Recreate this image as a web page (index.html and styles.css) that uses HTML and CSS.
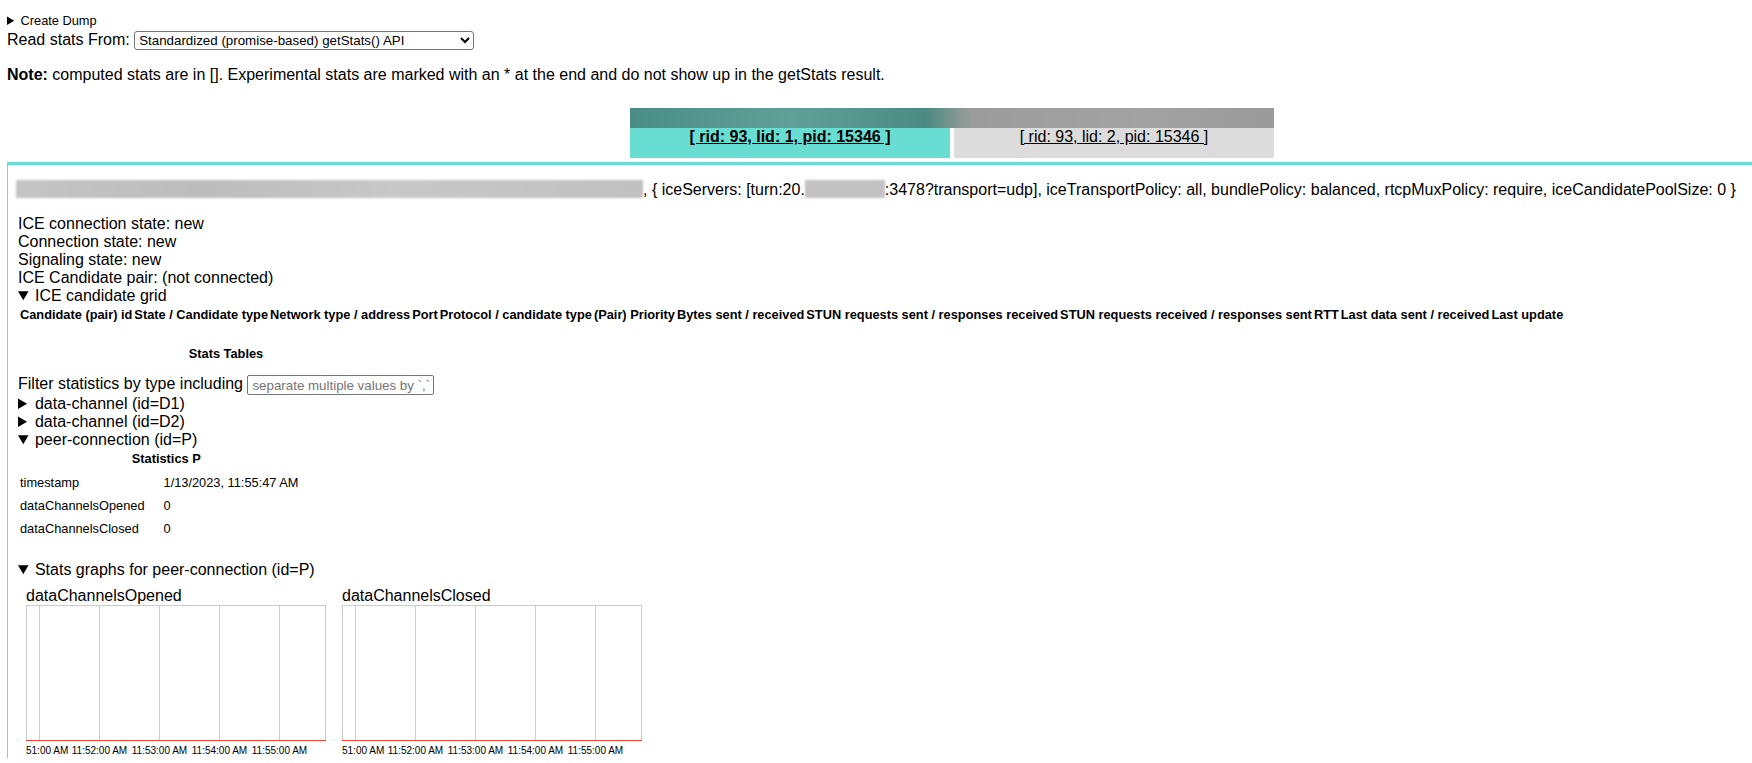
FILE: index.html
```html
<!DOCTYPE html>
<html lang="en">
<head>
<meta charset="utf-8">
<title>WebRTC Internals</title>
<link rel="stylesheet" href="styles.css">
</head>
<body>
<details class="dump"><summary>Create Dump</summary></details>
<div class="read-row">Read stats From:
  <select class="api-select"><option>Standardized (promise-based) getStats() API</option></select>
</div>
<p class="note"><b>Note:</b> computed stats are in []. Experimental stats are marked with an * at the end and do not show up in the getStats result.</p>
<div class="tabs">
  <div class="tabs-cover"></div>
  <div class="tab-row">
    <a class="tab active" href="#">[ rid: 93, lid: 1, pid: 15346 ]</a>
    <a class="tab" href="#">[ rid: 93, lid: 2, pid: 15346 ]</a>
  </div>
</div>
<main class="panel">
  <div class="config"><span class="blur-long"></span>, { iceServers: [turn:20.<span class="blur-short"></span>:3478?transport=udp], iceTransportPolicy: all, bundlePolicy: balanced, rtcpMuxPolicy: require, iceCandidatePoolSize: 0 }</div>
  <div class="states">
    <div>ICE connection state: new</div>
    <div>Connection state: new</div>
    <div>Signaling state: new</div>
    <div>ICE Candidate pair: (not connected)</div>
  </div>
  <details class="grid" open>
    <summary>ICE candidate grid</summary>
    <table class="cand">
      <tr>
        <th>Candidate (pair) id</th><th>State / Candidate type</th><th>Network type / address</th><th>Port</th><th>Protocol / candidate type</th><th>(Pair) Priority</th><th>Bytes sent / received</th><th>STUN requests sent / responses received</th><th>STUN requests received / responses sent</th><th>RTT</th><th>Last data sent / received</th><th>Last update</th>
      </tr>
    </table>
  </details>
  <section class="stats-box">
    <div class="stats-title">Stats Tables</div>
    <div class="filter">Filter statistics by type including <input class="filter-input" placeholder="separate multiple values by `,`"></div>
  </section>
  <details><summary>data-channel (id=D1)</summary></details>
  <details><summary>data-channel (id=D2)</summary></details>
  <details open>
    <summary>peer-connection (id=P)</summary>
    <table class="stat">
      <caption>Statistics P</caption>
      <tr><td>timestamp</td><td>1/13/2023, 11:55:47 AM</td></tr>
      <tr><td>dataChannelsOpened</td><td>0</td></tr>
      <tr><td>dataChannelsClosed</td><td>0</td></tr>
    </table>
  </details>
  <details class="graphs" open>
    <summary>Stats graphs for peer-connection (id=P)</summary>
    <div class="charts">
      <figure class="chart">
        <figcaption>dataChannelsOpened</figcaption>
        <svg width="300" height="153" viewBox="0 0 300 153">
          <rect x="0.5" y="0.5" width="299" height="135" fill="none" stroke="#ccc"/>
          <path d="M13.5 0V135M73.5 0V135M133.5 0V135M193.5 0V135M253.5 0V135" stroke="#ccc" fill="none"/>
          <path d="M0 135.5H300" stroke="#f44336" fill="none"/>
          <g class="tick"><text class="first" x="0" y="149">51:00 AM</text><text x="73.5" y="149">11:52:00 AM</text><text x="133.5" y="149">11:53:00 AM</text><text x="193.5" y="149">11:54:00 AM</text><text x="253.5" y="149">11:55:00 AM</text></g>
        </svg>
      </figure>
      <figure class="chart">
        <figcaption>dataChannelsClosed</figcaption>
        <svg width="300" height="153" viewBox="0 0 300 153">
          <rect x="0.5" y="0.5" width="299" height="135" fill="none" stroke="#ccc"/>
          <path d="M13.5 0V135M73.5 0V135M133.5 0V135M193.5 0V135M253.5 0V135" stroke="#ccc" fill="none"/>
          <path d="M0 135.5H300" stroke="#f44336" fill="none"/>
          <g class="tick"><text class="first" x="0" y="149">51:00 AM</text><text x="73.5" y="149">11:52:00 AM</text><text x="133.5" y="149">11:53:00 AM</text><text x="193.5" y="149">11:54:00 AM</text><text x="253.5" y="149">11:55:00 AM</text></g>
        </svg>
      </figure>
    </div>
  </details>
</main>
</body>
</html>
```
FILE: styles.css
```css
html, body { height: 100%; }
html { overflow: hidden; }
body {
  margin: 0;
  padding: 13px 0 0 7px;
  box-sizing: border-box;
  font-family: "Liberation Sans", Arial, sans-serif;
  font-size: 16px;
  line-height: 18px;
  color: #000;
  background: #fff;
  overflow: hidden;
}
.dump { font-size: 12.8px; line-height: 15px; height: 18px; }
.read-row { height: 19px; }
.api-select {
  font: 13.33px "Liberation Sans", Arial, sans-serif;
  width: 340px;
  height: 19px;
  margin: 0;
  vertical-align: top;
  background: #fff;
  color: #000;
  border: 1px solid #767676;
  border-radius: 3px;
}
.note { margin: 16px 0 0; height: 18px; }
.tabs { margin: 24px 0 0 623px; width: 644px; }
.tabs-cover {
  height: 20px;
  background: linear-gradient(90deg, #4a8d84 0%, #5fa197 25%, #4b8b82 46%, #9c9c9c 53%, #a2a2a2 80%, #9a9a9a 100%);
}
.tab-row { display: flex; gap: 4px; height: 30px; }
.tab {
  flex: 1;
  display: block;
  text-align: center;
  background: #dcdcdc;
  color: #000;
  line-height: 18px;
  text-decoration: underline;
}
.tab.active { background: #6addd2; font-weight: bold; }
.panel {
  margin-top: 4px;
  border-top: 3px solid #6addd2;
  border-left: 1px solid #6addd2;
  padding: 15px 0 0 10px;
}
.config { height: 18px; line-height: 20px; white-space: nowrap; }
.blur-long, .blur-short { display: inline-block; vertical-align: top; height: 18px; background: #c2c2c2; filter: blur(1px); }
.blur-long {
  width: 627px;
  margin-left: -2px;
  background: linear-gradient(90deg, #c4c4c4, #bcbcbc 30%, #c8c8c8 60%, #c0c0c0);
}
.blur-short { width: 80px; }
.states { margin-top: 17px; }
.cand { border-collapse: separate; border-spacing: 2px; font-size: 12.8px; line-height: 15px; white-space: nowrap; }
.cand th { padding: 0; font-weight: bold; text-align: center; }
.stats-box { width: 416px; margin-top: 22px; }
.stats-title { font-size: 12.8px; line-height: 15px; font-weight: bold; text-align: center; }
.filter { margin-top: 14px; height: 20px; line-height: 18px; white-space: nowrap; }
.filter-input {
  font: 13.33px "Liberation Sans", Arial, sans-serif;
  width: 187px;
  height: 20px;
  padding: 1px 4px;
  box-sizing: border-box;
  border: 1px solid #767676;
  border-radius: 2px;
  vertical-align: top;
}
.filter-input::placeholder { color: #757575; }
.stat { border-collapse: separate; border-spacing: 2px; font-size: 12.8px; line-height: 15px; }
.stat caption { font-weight: bold; padding: 2px 0 4px; }
.stat td { padding: 3px 17px 3px 0; }
.stat td:last-child { padding-right: 14px; }
.graphs { margin-top: 20px; }
.charts { display: flex; gap: 16px; padding-left: 8px; margin-top: 8px; }
.chart { margin: 0; width: 300px; }
.chart figcaption { line-height: 18px; height: 18px; }
.chart svg { display: block; }
.tick text { font: 10px "Liberation Sans", Arial, sans-serif; fill: #000; text-anchor: middle; }
.tick text.first { text-anchor: start; }
```
